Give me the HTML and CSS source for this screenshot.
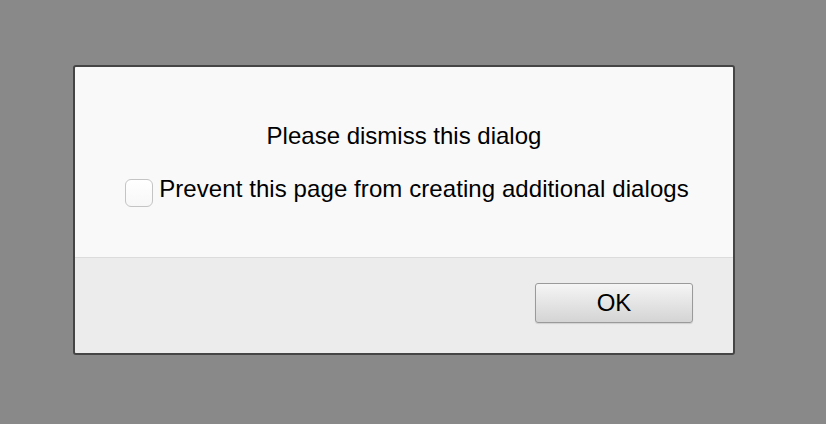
FILE: index.html
```html
<!DOCTYPE html>
<html>
<head>
<meta charset="utf-8">
<link rel="stylesheet" href="styles.css">
</head>
<body>
<div class="dialog">
  <div class="content">
    <div class="message">Please dismiss this dialog</div>
    <label class="prevent">
      <span class="checkbox"></span>
      <span class="prevent-text">Prevent this page from creating additional dialogs</span>
    </label>
  </div>
  <div class="footer">
    <button class="ok">OK</button>
  </div>
</div>
</body>
</html>
```
FILE: styles.css
```css
html, body {
  margin: 0;
  padding: 0;
  height: 100%;
}
body {
  background: #898989;
  font-family: "Liberation Sans", Arial, sans-serif;
  color: #000;
  padding-top: 65px;
  padding-left: 73px;
  box-sizing: border-box;
}
.dialog {
  width: 662px;
  height: 290px;
  box-sizing: border-box;
  border: 2px solid #454545;
  border-radius: 3px;
  display: flex;
  flex-direction: column;
  overflow: hidden;
}
.content {
  background: #f9f9f9;
  height: 191px;
  border-bottom: 1px solid #dcdcdc;
  display: flex;
  flex-direction: column;
  align-items: center;
  padding-top: 55px;
  box-sizing: border-box;
}
.message {
  font-size: 24px;
  line-height: 28px;
}
.prevent {
  display: flex;
  align-items: flex-start;
  gap: 6px;
  margin-top: 25px;
  margin-left: 6px;
  font-size: 24px;
  line-height: 28px;
}
.prevent-text {
  letter-spacing: 0.08px;
}
.checkbox {
  width: 26px;
  height: 26px;
  margin-top: 4px;
  border: 1px solid #c4c4c4;
  border-radius: 6px;
  background: linear-gradient(#ffffff, #f7f7f7);
}
.footer {
  flex: 1;
  background: #ececec;
  display: flex;
  justify-content: flex-end;
  align-items: flex-start;
  padding-top: 25px;
  padding-right: 40px;
}
.ok {
  width: 158px;
  height: 40px;
  border: 1px solid #9a9a9a;
  border-radius: 3px;
  background: linear-gradient(#f5f5f5, #d4d4d4);
  box-shadow: 0 1px 1px rgba(0,0,0,0.12);
  font-family: "Liberation Sans", Arial, sans-serif;
  font-size: 24px;
  line-height: 28px;
  color: #000;
  padding: 0;
}
```
